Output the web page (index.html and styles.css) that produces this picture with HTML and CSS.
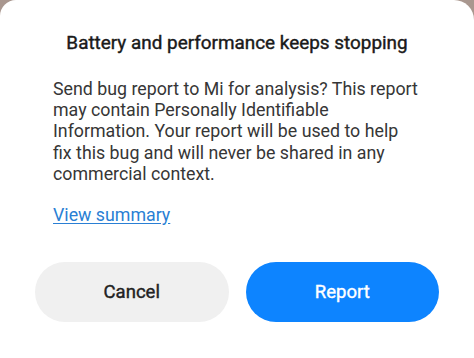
FILE: index.html
```html
<!DOCTYPE html>
<html>
<head>
<meta charset="utf-8">
<link rel="stylesheet" href="styles.css">
</head>
<body>
<div class="dialog">
  <h1 class="title">Battery and performance keeps stopping</h1>
  <div class="content">
    <p class="message">Send bug report to Mi for analysis? This report<br>may contain Personally Identifiable<br>Information. Your report will be used to help<br>fix this bug and will never be shared in any<br>commercial context.</p>
    <a class="link" href="#">View summary</a>
  </div>
  <div class="actions">
    <button class="btn btn-cancel">Cancel</button>
    <button class="btn btn-report">Report</button>
  </div>
</div>
</body>
</html>
```
FILE: styles.css
```css
html, body {
  margin: 0;
  padding: 0;
  background: #a9978f;
  height: 100%;
  overflow: hidden;
}
.dialog {
  background: #ffffff;
  border-radius: 16px 20px 0 0;
  height: 358px;
  box-sizing: border-box;
  padding: 32px 35px 0 35px;
  font-family: Roboto, "Noto Sans", sans-serif;
}
.title {
  margin: 0;
  font-size: 18.9px;
  line-height: 22px;
  font-weight: 400;
  -webkit-text-stroke: 0.4px #1a1a1a;
  color: #1a1a1a;
  text-align: center;
}
.content {
  padding: 0 0 0 18px;
  margin-top: 24px;
}
.message {
  margin: 0;
  font-size: 17.8px;
  line-height: 21.2px;
  color: #363636;
  white-space: nowrap;
}
.link {
  display: inline-block;
  margin-top: 20px;
  font-size: 17.8px;
  line-height: 21px;
  color: #2a7fd4;
  text-decoration: underline;
  text-underline-offset: 2px;
}
.actions {
  display: flex;
  gap: 17px;
  margin-top: 37px;
}
.btn {
  flex: 1;
  height: 60px;
  border: none;
  border-radius: 30px;
  font-family: Roboto, "Noto Sans", sans-serif;
  font-size: 18.5px;
  font-weight: 400;
  padding: 0;
}
.btn-cancel {
  background: #f0f0f0;
  color: #222222;
  -webkit-text-stroke: 0.4px #222222;
}
.btn-report {
  background: #0d84ff;
  color: #ffffff;
  -webkit-text-stroke: 0.4px #ffffff;
}
```
